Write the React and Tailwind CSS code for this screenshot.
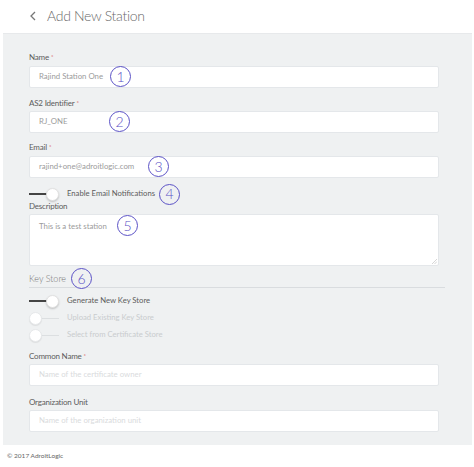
import React from "react";

const font = { fontFamily: "Lato, 'Open Sans', sans-serif" };

function Badge({ n, className = "" }) {
  return (
    <span
      className={`flex items-center justify-center w-[21px] h-[21px] rounded-full border-[1.5px] border-[#5b52c6] text-[#5b52c6] text-[14px] leading-none font-light ${className}`}
    >
      {n}
    </span>
  );
}

function Label({ children, required, className = "" }) {
  return (
    <div className={`h-[12px] text-[8px] leading-[12px] tracking-[-0.2px] text-[#5c5c5c] ${className}`}>
      {children}
      {required && <sup className="text-[#d9534f] text-[6px] ml-[2px] relative -top-[1px]">*</sup>}
    </div>
  );
}

function Input({ value, placeholder, className = "" }) {
  return (
    <div
      className={`relative flex items-center h-[22px] bg-white border border-[#e4e7ea] rounded-[2px] pl-[9px] text-[7.8px] ${className}`}
    >
      <span className={value ? "text-[#9b9b9b]" : "text-[#d9dbdd]"}>{value || placeholder}</span>
    </div>
  );
}

function Toggle({ on, label, children }) {
  return (
    <div className="flex items-center h-[14px]">
      <div className="relative w-[30px] h-[14px] flex items-center">
        {on ? (
          <>
            <div className="absolute left-0 w-[22px] h-[2px] bg-[#444]" />
            <div className="absolute left-[17px] w-[13px] h-[13px] rounded-full bg-white border border-[#e2e2e2] shadow-[0_1px_2px_rgba(0,0,0,0.2)]" />
          </>
        ) : (
          <>
            <div className="absolute left-[12px] w-[18px] h-[1px] bg-[#dcdfe1]" />
            <div className="absolute left-0 w-[13px] h-[13px] rounded-full bg-white border border-[#e6e8ea] shadow-[0_1px_1px_rgba(0,0,0,0.08)]" />
          </>
        )}
      </div>
      <span className={`ml-[8px] text-[7.7px] ${on ? "text-[#5c5c5c]" : "text-[#c9ccce]"}`}>{label}</span>
      {children}
    </div>
  );
}

export default function App() {
  return (
    <div className="w-[474px] h-[467px] bg-white overflow-hidden" style={font}>
      <header className="h-[33px] flex items-center pl-[29px]">
        <svg width="8" height="10" viewBox="0 0 8 10" className="mt-[-2px]">
          <path d="M6 1 L2 5 L6 9" fill="none" stroke="#777" strokeWidth="1.3" />
        </svg>
        <h1 className="ml-[10px] text-[14px] tracking-[-0.3px] font-light text-[#6a6a6a] leading-none mt-[-2px]">Add New Station</h1>
      </header>

      <main className="ml-[3px] mr-[2px] h-[412px] bg-[#eff1f2] border-t border-[#e7e9eb] pt-[17px] pl-[26px] pr-[33px]">
        <Label required>Name</Label>
        <div className="relative mt-[3px]">
          <Input value="Rajind Station One" />
          <Badge n="1" className="absolute left-[81px] top-[0px]" />
        </div>

        <Label required className="mt-[9px]">AS2 Identifier</Label>
        <div className="relative mt-[2px]">
          <Input value="RJ_ONE" />
          <Badge n="2" className="absolute left-[80px] top-[0px]" />
        </div>

        <Label required className="mt-[8px]">Email</Label>
        <div className="relative mt-[3px]">
          <Input value="rajind+one@adroitlogic.com" />
          <Badge n="3" className="absolute left-[119px] top-[0px]" />
        </div>

        <div className="mt-[9px]">
          <Toggle on label="Enable Email Notifications">
            <Badge n="4" className="ml-[4px] my-[-4px]" />
          </Toggle>
        </div>

        <Label className="mt-[-1px]">Description</Label>
        <div className="relative mt-[2px] h-[52px] bg-white border border-[#e4e7ea] rounded-[2px] pl-[9px] pt-[6px] text-[7.8px] text-[#9b9b9b]">
          This is a test station
          <Badge n="5" className="absolute left-[87px] top-[0px]" />
          <svg width="5" height="5" viewBox="0 0 5 5" className="absolute right-[1px] bottom-[1px]">
            <path d="M0 5 L5 0 M2.5 5 L5 2.5" stroke="#bbb" strokeWidth="0.6" />
          </svg>
        </div>

        <div className="mr-[-6px] border-b border-[#d9dcdf] flex items-end h-[22px] pb-[2px]">
          <span className="text-[9px] leading-[12px] text-[#777] font-light">Key Store</span>
          <Badge n="6" className="ml-[5px] mb-[-4px] bg-[#eff1f2]" />
        </div>

        <div className="mt-[6px] flex flex-col gap-[3px]">
          <Toggle on label="Generate New Key Store" />
          <Toggle label="Upload Existing Key Store" />
          <Toggle label="Select from Certificate Store" />
        </div>

        <Label required className="mt-[8px]">Common Name</Label>
        <Input className="mt-[2px]" placeholder="Name of the certificate owner" />

        <Label className="mt-[10px]">Organization Unit</Label>
        <Input className="mt-[2px]" placeholder="Name of the organization unit" />
      </main>

      <footer className="h-[22px] flex items-center pl-[7px] text-[6.5px] text-[#666]">
        © 2017 AdroitLogic
      </footer>
    </div>
  );
}
